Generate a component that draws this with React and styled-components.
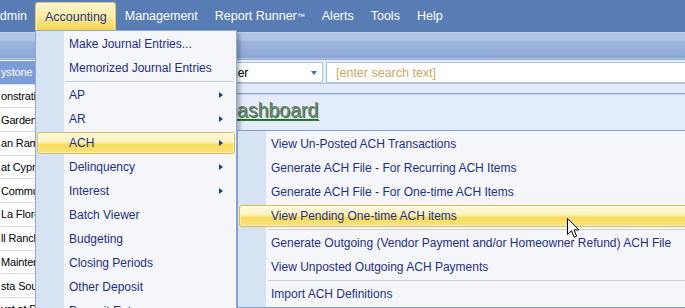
import React from 'react';
import styled, { createGlobalStyle } from 'styled-components';

const GlobalStyle = createGlobalStyle`
  html, body {
    margin: 0;
    padding: 0;
    width: 685px;
    height: 308px;
    overflow: hidden;
    background: #e3edfb;
  }
  body {
    font-family: "Liberation Sans", Arial, sans-serif;
    font-size: 12px;
  }
`;

const topMenus = ['Admin', 'Accounting', 'Management', 'Report Runner', 'Alerts', 'Tools', 'Help'];

const associations = [
  'ystone I', 'onstration', 'Garden', 'an Ramon', 'at Cypress', 'Community',
  'La Floresta', 'll Ranch', 'Maintenance', 'sta South', 'yst at Park', 'Hills',
];

const accountingItems = [
  { label: 'Make Journal Entries...' },
  { label: 'Memorized Journal Entries' },
  { sep: true },
  { label: 'AP', sub: true },
  { label: 'AR', sub: true },
  { label: 'ACH', sub: true, active: true },
  { label: 'Delinquency', sub: true },
  { label: 'Interest', sub: true },
  { label: 'Batch Viewer' },
  { label: 'Budgeting' },
  { label: 'Closing Periods' },
  { label: 'Other Deposit' },
  { label: 'Deposit Entry' },
];

const achItems = [
  { label: 'View Un-Posted ACH Transactions' },
  { label: 'Generate ACH File - For Recurring ACH Items' },
  { label: 'Generate ACH File - For One-time ACH Items' },
  { label: 'View Pending One-time ACH items', active: true },
  { sep: true },
  { label: 'Generate Outgoing (Vendor Payment and/or Homeowner Refund) ACH File' },
  { label: 'View Unposted Outgoing ACH Payments' },
  { sep: true },
  { label: 'Import ACH Definitions' },
];

const Screen = styled.div`
  position: relative;
  width: 685px;
  height: 308px;
  overflow: hidden;
  display: flex;
  flex-direction: column;
`;

const MenuBar = styled.div`
  height: 32px;
  flex-shrink: 0;
  display: flex;
  margin-left: -17px;
  background: #587cb4;
`;

const MenuTitle = styled.div`
  box-sizing: border-box;
  display: flex;
  align-items: center;
  padding: 0 8.5px;
  font-size: 12.5px;
  white-space: nowrap;
  color: ${p => (p.$active ? '#1e3586' : '#ffffff')};
  ${p => p.$active && `
    margin-top: 2px;
    padding-bottom: 2px;
    border: 1px solid #e6c566;
    border-bottom: none;
    border-radius: 3px 3px 0 0;
    background: linear-gradient(to bottom, #fdf6cf 0%, #fbeca4 45%, #f6da63 80%, #f3d155 100%);
    box-shadow: inset 0 0 0 1px rgba(255, 255, 255, 0.45);
  `}

  sup {
    font-size: 8px;
    vertical-align: 5px;
  }
`;

const CaptionBar = styled.div`
  height: 28px;
  flex-shrink: 0;
  background: linear-gradient(
    to bottom,
    #c4d4ec 0px,
    #b3c7e6 1px,
    #b0c5e5 8px,
    #a0b8de 9px,
    #8aa8d5 26px,
    #b4c7e5 26px,
    #b4c7e5 27px,
    #8eaad5 27px
  );
`;

const Body = styled.div`
  flex: 1;
  display: flex;
  min-height: 0;
`;

const AssocList = styled.div`
  width: 192px;
  flex-shrink: 0;
  padding-top: 1px;
  background: #ffffff;
  border-right: 1px solid #a9bfdc;
  overflow: hidden;
`;

const AssocRow = styled.div`
  box-sizing: border-box;
  height: 23.7px;
  display: flex;
  align-items: center;
  padding-left: 1px;
  font-size: 11px;
  letter-spacing: -0.15px;
  white-space: nowrap;
  border-bottom: 1px solid #d9dfe8;
  color: ${p => (p.$selected ? '#ffffff' : '#000000')};
  background: ${p => (p.$selected ? '#7d9dd8' : '#ffffff')};
`;

const RightPane = styled.div`
  flex: 1;
  display: flex;
  flex-direction: column;
  min-width: 0;
`;

const SearchRow = styled.div`
  box-sizing: border-box;
  height: 24px;
  flex-shrink: 0;
  display: flex;
  gap: 3px;
  padding: 2px 0 0 3px;
  background: #e6eefa;
  border-bottom: 1px solid #b3c6e2;
`;

const SelectBox = styled.div`
  box-sizing: border-box;
  width: 127px;
  height: 21px;
  display: flex;
  align-items: center;
  justify-content: space-between;
  padding: 0 5px 0 4px;
  background: #ffffff;
  border: 1px solid #a9bfdc;
  color: #000;
`;

const DropArrow = styled.span`
  width: 0;
  height: 0;
  border-left: 3.5px solid transparent;
  border-right: 3.5px solid transparent;
  border-top: 4px solid #4d6ea8;
`;

const SearchBox = styled.div`
  box-sizing: border-box;
  flex: 1;
  height: 21px;
  display: flex;
  align-items: center;
  padding-left: 9px;
  background: #ffffff;
  border: 1px solid #a9bfdc;
  border-right: none;
  color: #c8aa66;
  font-size: 12.5px;
`;

const Band = styled.div`
  height: 9px;
  flex-shrink: 0;
  background: #e0eaf8;
  border-bottom: 1px solid #86a4d2;
`;

const DashHeader = styled.div`
  height: 36px;
  flex-shrink: 0;
  display: flex;
  align-items: flex-start;
  padding: 4px 0 0 30px;
  background: #e3edfb;
  border-top: 1px solid #c3d5ef;
`;

const DashTitle = styled.span`
  font-size: 19.5px;
  color: #767d72;
  text-decoration: underline;
  text-decoration-color: #23692a;
  text-underline-offset: 2px;
  text-shadow: 1px 1px 0 #2f7a31;
`;

const Dropdown = styled.div`
  position: absolute;
  box-sizing: border-box;
  display: flex;
  flex-direction: column;
  padding: 1px 0;
  border: 1px solid #8ea9d4;
  background: linear-gradient(to right, #d6e3f3 28px, #f4f6f9 28px);
  box-shadow: 3px 3px 4px rgba(0, 0, 0, 0.28);
`;

const AccountingMenu = styled(Dropdown)`
  left: 35px;
  top: 30px;
  width: 202px;
`;

const AchMenu = styled(Dropdown)`
  left: 237px;
  top: 130px;
  width: 470px;
  border-color: #7fa1d6;
`;

const Item = styled.div`
  box-sizing: border-box;
  position: relative;
  flex-shrink: 0;
  height: 22px;
  margin: 1px 1px;
  display: flex;
  align-items: center;
  padding-left: 31px;
  color: #1e2f88;
  white-space: nowrap;
  border: 1px solid transparent;
  border-radius: 3px;
  ${p => p.$active && `
    border-color: #e0bb52;
    background: linear-gradient(to bottom, #fffbe2 0%, #fdf2b9 45%, #f7db5b 58%, #f9e27e 100%);
    box-shadow: inset 0 0 0 1px rgba(255, 255, 255, 0.5);
  `}
`;

const SubArrow = styled.span`
  position: absolute;
  right: 11px;
  top: 7px;
  width: 0;
  height: 0;
  border-top: 3.5px solid transparent;
  border-bottom: 3.5px solid transparent;
  border-left: 4px solid #1c3b90;
`;

const Separator = styled.div`
  flex-shrink: 0;
  height: 3px;
  display: flex;
  align-items: center;
  padding: 0 2px 0 30px;

  &::after {
    content: '';
    flex: 1;
    height: 1px;
    background: #c6cfdc;
  }
`;

const Cursor = styled.svg`
  position: absolute;
  left: 567px;
  top: 218px;
`;

function MenuList({ items }) {
  return items.map((it, i) =>
    it.sep ? (
      <Separator key={i} />
    ) : (
      <Item key={i} $active={it.active}>
        {it.label}
        {it.sub && <SubArrow />}
      </Item>
    )
  );
}

export default function App() {
  return (
    <Screen>
      <GlobalStyle />
      <MenuBar>
        {topMenus.map(m => (
          <MenuTitle key={m} $active={m === 'Accounting'}>
            {m}
            {m === 'Report Runner' && <sup>™</sup>}
          </MenuTitle>
        ))}
      </MenuBar>
      <CaptionBar />
      <Body>
        <AssocList>
          {associations.map((a, i) => (
            <AssocRow key={a} $selected={i === 0}>{a}</AssocRow>
          ))}
        </AssocList>
        <RightPane>
          <SearchRow>
            <SelectBox>
              <span>Manager</span>
              <DropArrow />
            </SelectBox>
            <SearchBox>[enter search text]</SearchBox>
          </SearchRow>
          <Band />
          <DashHeader>
            <DashTitle>Dashboard</DashTitle>
          </DashHeader>
        </RightPane>
      </Body>

      <AccountingMenu>
        <MenuList items={accountingItems} />
      </AccountingMenu>
      <AchMenu>
        <MenuList items={achItems} />
      </AchMenu>

      <Cursor width="13" height="21" viewBox="0 0 13 21">
        <path d="M0.5 0.5 L0.5 16.5 L4.5 12.8 L7.2 19.2 L9.6 18.2 L7 11.9 L12 11.9 Z"
          fill="#ffffff" stroke="#000000" strokeWidth="1" strokeLinejoin="miter" />
      </Cursor>
    </Screen>
  );
}
